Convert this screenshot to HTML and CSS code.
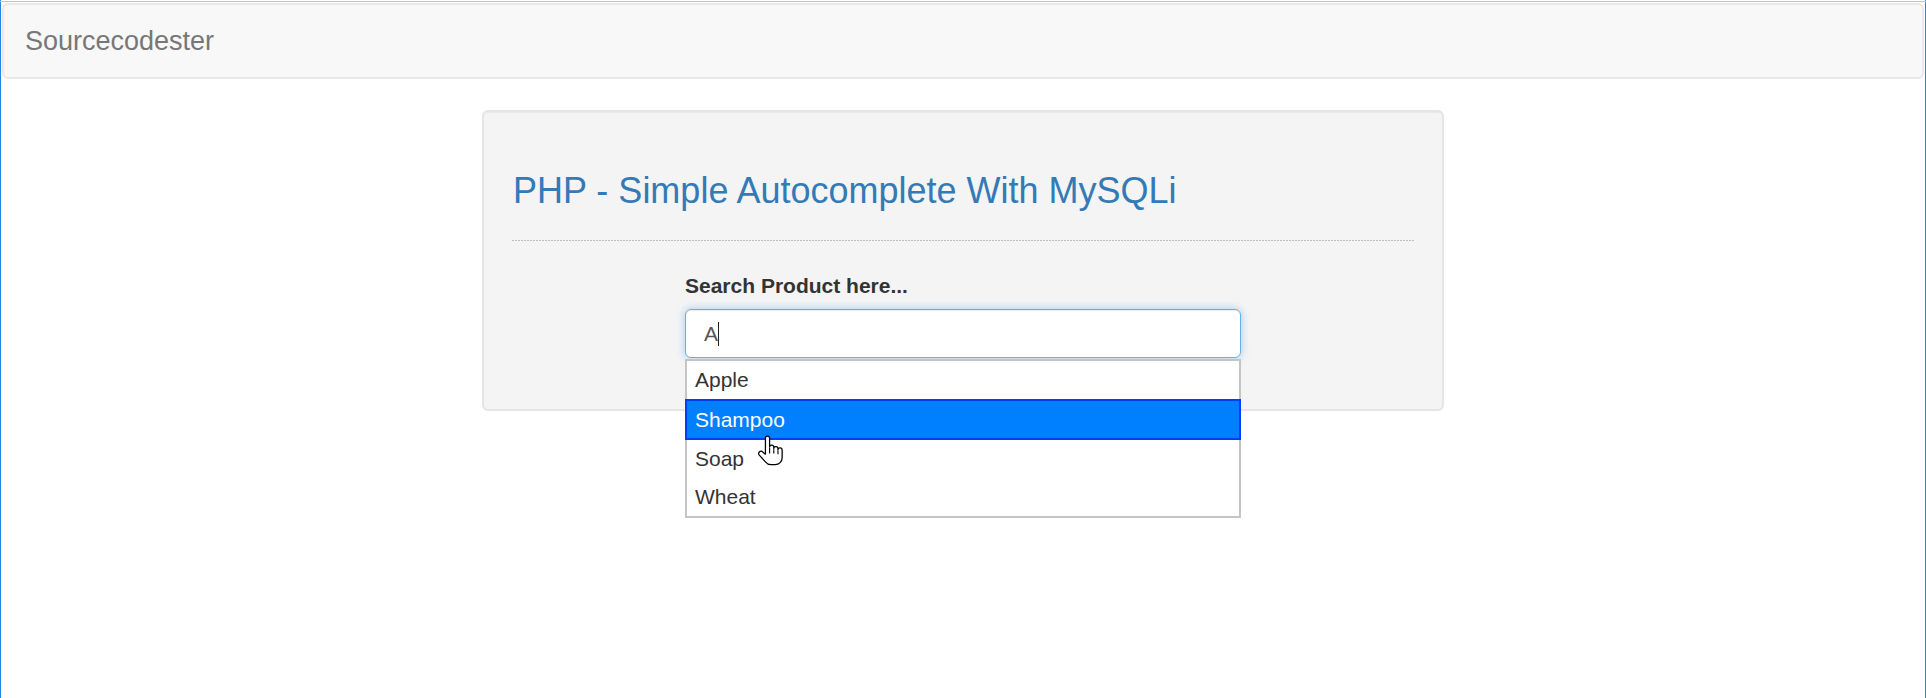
FILE: index.html
```html
<!DOCTYPE html>
<html lang="en">
<head>
<meta charset="utf-8">
<title>PHP - Simple Autocomplete With MySQLi</title>
<link rel="stylesheet" href="styles.css">
</head>
<body>
<div class="window">
  <div class="topline"></div>
  <nav class="navbar">
    <a class="brand">Sourcecodester</a>
  </nav>
  <div class="container">
    <div class="well">
      <h3 class="title">PHP - Simple Autocomplete With MySQLi</h3>
      <hr class="dotted">
      <form class="search-form">
        <label class="label">Search Product here...</label>
        <div class="field">
          <div class="input"><span class="value">A</span><span class="caret"></span></div>
          <ul class="menu">
            <li class="item">Apple</li>
            <li class="item active">Shampoo</li>
            <li class="item">Soap</li>
            <li class="item">Wheat</li>
            <svg class="hand" viewBox="0 0 20 23" width="28" height="32">
              <path d="M6 3 a1.5 1.5 0 0 1 3 0 V9.5 a1.5 1.5 0 0 1 3 0 V10.5 a1.5 1.5 0 0 1 3 0 V11.5 a1.5 1.5 0 0 1 3 0 V17 c0 2.8 -2.2 5 -5 5 h-3 c-1.6 0 -3 -0.7 -4 -2 L1.6 15.2 c-0.6 -0.7 -0.6 -1.7 0 -2.3 c0.7 -0.7 1.8 -0.7 2.4 0 L6 14.5 Z" fill="#fff" stroke="#000" stroke-width="0.9" stroke-linejoin="round"/>
              <path d="M9 10 V14 M12 11 V14 M15 12 V14.5" fill="none" stroke="#000" stroke-width="0.8"/>
            </svg>
          </ul>
        </div>
      </form>
    </div>
  </div>
</div>
</body>
</html>
```
FILE: styles.css
```css
* { box-sizing: border-box; }
html, body { margin: 0; padding: 0; background: #fff; }
body {
  font-family: "Liberation Sans", Arial, Helvetica, sans-serif;
  color: #333;
}
.window {
  min-height: 698px;
  border-left: 1px solid #2188e4;
  border-right: 1px solid #2188e4;
  padding-top: 1px;
}
.topline { height: 1px; background: #c4c4c4; margin: 0 -1px; }
.navbar {
  margin: 1px 1px 31px 1px;
  height: 76px;
  background: #f8f8f8;
  border: 2px solid #e9e9e9;
  border-radius: 6px;
  display: flex;
  align-items: center;
  padding-left: 21px;
}
.brand { font-size: 27px; color: #777; text-decoration: none; }
.container { width: 962px; margin: 0 auto; }
.well {
  background: #f4f4f4;
  border: 2px solid #e5e5e5;
  border-radius: 6px;
  padding: 28px;
  box-shadow: inset 0 1px 1px rgba(0,0,0,.05);
}
.title {
  margin: 31px 0 0 1px;
  font-size: 36px;
  line-height: 40px;
  font-weight: normal;
  color: #337ab7;
}
.dotted {
  border: 0;
  height: 1px;
  margin: 29px 0 30px 0;
  background: repeating-linear-gradient(to right, #bdbdbd 0 2px, transparent 2px 3px);
}
.search-form { width: 556px; margin: 0 auto 23px auto; }
.label {
  display: block;
  font-size: 21px;
  font-weight: bold;
  line-height: 30px;
  margin-bottom: 8px;
  color: #333;
}
.field { position: relative; }
.input {
  height: 49px;
  background: #fff;
  border: 1.5px solid #66afe9;
  border-radius: 6px;
  box-shadow: inset 0 1px 1px rgba(0,0,0,.075), 0 0 8px rgba(102,175,233,.6);
  padding-left: 18px;
  display: flex;
  align-items: center;
  font-size: 21px;
  color: #555;
}
.caret { display: inline-block; width: 1px; height: 24px; background: #222; }
.menu {
  position: absolute;
  top: calc(100% + 1px);
  left: 0;
  right: 0;
  margin: 0;
  padding: 0;
  list-style: none;
  background: #fff;
  border: 2px solid #c5c5c5;
}
.item {
  font-size: 21px;
  line-height: 38px;
  padding-left: 8px;
  color: #333;
}
.item.active {
  background: #007fff;
  border: 2px solid #003eff;
  color: #fff;
  line-height: 37px;
  margin: 0 -2px;
}
.hand { position: absolute; left: 70px; top: 73px; }
```
